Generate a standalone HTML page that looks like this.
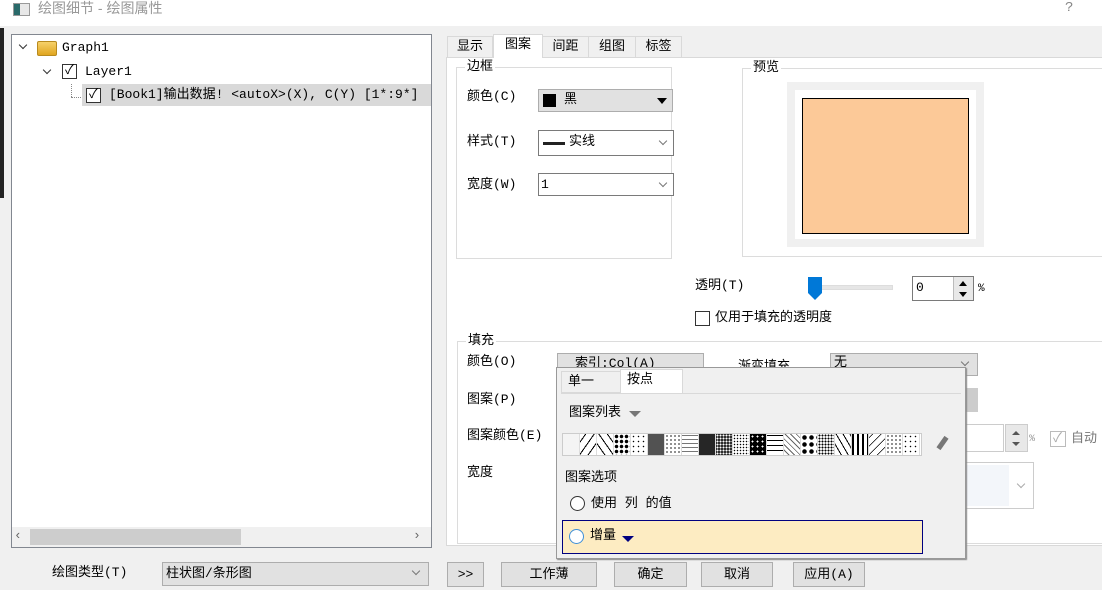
<!DOCTYPE html>
<html><head><meta charset="utf-8"><style>
*{box-sizing:border-box;margin:0;padding:0}
body{width:1102px;height:590px;overflow:hidden;background:#f0f0f0;position:relative;font-family:"Liberation Mono","Noto Sans CJK SC",monospace;font-size:13px;color:#000}
.a{position:absolute}
.mono{font-family:"Liberation Mono","Noto Sans CJK SC",monospace}
.lbl{position:absolute;font-size:13px;line-height:16px;white-space:nowrap}
.grp{position:absolute;border:1px solid #dcdcdc}
.gt{position:absolute;top:-9px;left:8px;background:#fff;padding:0 2px;line-height:16px}
.btn{position:absolute;background:#e1e1e1;border:1px solid #adadad;text-align:center;line-height:23px;font-size:13px}
.chev{position:absolute;width:6px;height:6px;border-right:1px solid #777;border-bottom:1px solid #777;transform:rotate(45deg)}
.cb{position:absolute;width:15px;height:15px;border:1px solid #333;background:#fff}
.tab{position:absolute;top:36px;height:22px;border:1px solid #d9d9d9;background:#f0f0f0;text-align:center;line-height:20px}
.pc{position:absolute;top:434px;width:17px;height:21px;border-right:1px solid #ddd}
</style></head><body>
<div class="a" style="left:0;top:0;width:1102px;height:26px;background:#fff"></div>
<div class="a" style="left:13px;top:3px;width:17px;height:13px;border:1px solid #999;background:linear-gradient(90deg,#2a6a6a 0 40%,#e8e8e8 40%)"></div>
<div class="lbl" style="left:38px;top:0px;color:#999;font-size:14px;font-family:'Liberation Sans','Noto Sans CJK SC',sans-serif">绘图细节 - 绘图属性</div>
<div class="lbl" style="left:1065px;top:0px;color:#888;font-size:14px">?</div>
<div class="a" style="left:0;top:28px;width:4px;height:170px;background:#222"></div>

<div class="a" style="left:11px;top:34px;width:421px;height:514px;background:#fff;border:1px solid #828790"></div>
<div class="chev" style="left:20px;top:42px;border-color:#333"></div>
<div class="a" style="left:37px;top:41px;width:20px;height:15px;background:linear-gradient(#f6d16a,#e0a520);border:1px solid #b88a1e;border-radius:2px"></div>
<div class="lbl" style="left:62px;top:40px">Graph1</div>
<div class="chev" style="left:44px;top:67px;border-color:#333"></div>
<div class="cb" style="left:62px;top:64px"></div><div class="lbl" style="left:65px;top:63px">✓</div>
<div class="lbl" style="left:85px;top:64px">Layer1</div>
<div class="a" style="left:71px;top:84px;height:13px;border-left:1px dotted #888"></div>
<div class="a" style="left:71px;top:97px;width:12px;border-top:1px dotted #888"></div>
<div class="a" style="left:82px;top:84px;width:349px;height:22px;background:#d9d9d9"></div>
<div class="cb" style="left:86px;top:88px"></div><div class="lbl" style="left:89px;top:87px">✓</div>
<div class="lbl" style="left:109px;top:87px">[Book1]输出数据! &lt;autoX&gt;(X), C(Y) [1*:9*]</div>
<div class="a" style="left:12px;top:527px;width:419px;height:20px;background:#f0f0f0"></div>
<div class="a" style="left:30px;top:529px;width:211px;height:16px;background:#cdcdcd"></div>
<div class="lbl" style="left:14px;top:528px;color:#666">‹</div><div class="lbl" style="left:413px;top:528px;color:#666">›</div>

<div class="a" style="left:446px;top:57px;width:660px;height:489px;background:#fff;border:1px solid #d9d9d9"></div>
<div class="tab" style="left:447px;width:46px">显示</div>
<div class="tab" style="left:493px;top:34px;width:50px;height:24px;background:#fff;border-bottom:none">图案</div>
<div class="tab" style="left:542px;width:47px">间距</div>
<div class="tab" style="left:588px;width:48px">组图</div>
<div class="tab" style="left:635px;width:47px">标签</div>

<div class="grp" style="left:456px;top:67px;width:216px;height:192px"><span class="gt">边框</span></div>
<div class="lbl" style="left:467px;top:89px">颜色(C)</div>
<div class="a" style="left:538px;top:89px;width:135px;height:23px;background:#e1e1e1;border:1px solid #adadad"></div>
<div class="a" style="left:543px;top:94px;width:13px;height:13px;background:#000"></div>
<div class="lbl" style="left:564px;top:92px">黑</div>
<div class="a" style="left:657px;top:98px;border-left:5px solid transparent;border-right:5px solid transparent;border-top:6px solid #000"></div>
<div class="lbl" style="left:467px;top:134px">样式(T)</div>
<div class="a" style="left:538px;top:130px;width:136px;height:26px;background:#fff;border:1px solid #7a7a7a"></div>
<div class="a" style="left:543px;top:142px;width:22px;height:3px;background:#222"></div>
<div class="lbl" style="left:569px;top:134px">实线</div>
<div class="chev" style="left:660px;top:138px"></div>
<div class="lbl" style="left:467px;top:177px">宽度(W)</div>
<div class="a" style="left:538px;top:173px;width:136px;height:23px;background:#fff;border:1px solid #7a7a7a"></div>
<div class="lbl" style="left:541px;top:177px">1</div>
<div class="chev" style="left:660px;top:180px"></div>

<div class="grp" style="left:742px;top:68px;width:362px;height:189px"><span class="gt">预览</span></div>
<div class="a" style="left:787px;top:82px;width:197px;height:165px;background:#f0f0f0"></div>
<div class="a" style="left:795px;top:90px;width:181px;height:149px;background:#fff"></div>
<div class="a" style="left:802px;top:98px;width:167px;height:136px;background:#fcc998;border:1px solid #000"></div>

<div class="lbl" style="left:695px;top:278px">透明(T)</div>
<div class="a" style="left:810px;top:285px;width:83px;height:5px;background:#e6e6e6;border:1px solid #ddd"></div>
<div class="a" style="left:808px;top:277px;width:14px;height:16px;background:#0078d7"></div>
<div class="a" style="left:808px;top:293px;border-left:7px solid transparent;border-right:7px solid transparent;border-top:7px solid #0078d7"></div>
<div class="a" style="left:912px;top:276px;width:62px;height:25px;background:#fff;border:1px solid #7a7a7a"></div>
<div class="lbl" style="left:916px;top:280px">0</div>
<div class="a" style="left:953px;top:277px;width:20px;height:23px;background:#e8e8e8;border-left:1px solid #bbb"></div>
<div class="a" style="left:959px;top:281px;border-left:4px solid transparent;border-right:4px solid transparent;border-bottom:5px solid #000"></div>
<div class="a" style="left:959px;top:292px;border-left:4px solid transparent;border-right:4px solid transparent;border-top:5px solid #000"></div>
<div class="lbl" style="left:978px;top:281px;font-size:11px">%</div>
<div class="cb" style="left:695px;top:311px;border-color:#333"></div>
<div class="lbl" style="left:715px;top:310px">仅用于填充的透明度</div>

<div class="grp" style="left:457px;top:341px;width:650px;height:203px"><span class="gt">填充</span></div>
<div class="lbl" style="left:467px;top:354px">颜色(O)</div>
<div class="lbl" style="left:467px;top:392px">图案(P)</div>
<div class="lbl" style="left:467px;top:428px">图案颜色(E)</div>
<div class="lbl" style="left:467px;top:465px">宽度</div>
<div class="a" style="left:557px;top:353px;width:147px;height:24px;background:#e1e1e1;border:1px solid #adadad"></div>
<div class="lbl" style="left:575px;top:356px">索引:Col(A)</div>
<div class="lbl" style="left:738px;top:359px">渐变填充</div>
<div class="a" style="left:830px;top:353px;width:148px;height:23px;background:#e1e1e1;border:1px solid #adadad"></div>
<div class="lbl" style="left:834px;top:355px">无</div>
<div class="chev" style="left:962px;top:359px"></div>
<div class="a" style="left:960px;top:388px;width:18px;height:24px;background:#ccc"></div>
<div class="a" style="left:960px;top:424px;width:44px;height:28px;background:#fff;border:1px solid #ccc"></div>
<div class="a" style="left:1005px;top:424px;width:23px;height:28px;background:#e8e8e8;border:1px solid #ccc"></div>
<div class="a" style="left:1012px;top:431px;border-left:4px solid transparent;border-right:4px solid transparent;border-bottom:4px solid #555"></div>
<div class="a" style="left:1012px;top:442px;border-left:4px solid transparent;border-right:4px solid transparent;border-top:4px solid #555"></div>
<div class="lbl" style="left:1029px;top:432px;color:#999;font-size:10px">%</div>
<div class="a" style="left:1050px;top:431px;width:16px;height:16px;border:1px solid #bbb;background:#fff"></div>
<div class="lbl" style="left:1053px;top:431px;color:#aaa">✓</div>
<div class="lbl" style="left:1071px;top:431px;color:#777">自动</div>
<div class="a" style="left:960px;top:462px;width:74px;height:47px;background:#fff;border:1px solid #ccc"></div>
<div class="a" style="left:962px;top:465px;width:47px;height:41px;background:#f3f6fa"></div>
<div class="chev" style="left:1018px;top:481px;border-color:#aaa"></div>

<div class="a" style="left:556px;top:367px;width:410px;height:192px;background:#f0f0f0;border:1px solid #999;box-shadow:1px 1px 1px #888"></div>
<div class="a" style="left:561px;top:371px;width:60px;height:22px;border:1px solid #d9d9d9;background:#f0f0f0"></div>
<div class="lbl" style="left:568px;top:374px">单一</div>
<div class="a" style="left:620px;top:369px;width:63px;height:25px;background:#fff;border:1px solid #d9d9d9;border-bottom:none"></div>
<div class="lbl" style="left:627px;top:372px">按点</div>
<div class="a" style="left:561px;top:393px;width:400px;border-top:1px solid #d9d9d9"></div>
<div class="lbl" style="left:569px;top:405px">图案列表</div>
<div class="a" style="left:629px;top:411px;border-left:6px solid transparent;border-right:6px solid transparent;border-top:6px solid #777"></div>
<div class="a" style="left:562px;top:433px;width:360px;height:23px;border:1px solid #ccc;background:#fff"></div>
<div class="pc" style="left:563px;background:#f4f4f4"></div>
<div class="pc" style="left:580px;background:repeating-linear-gradient(-55deg,#fff 0 6px,#000 6px 7px)"></div>
<div class="pc" style="left:597px;background:repeating-linear-gradient(55deg,#fff 0 6px,#000 6px 7px)"></div>
<div class="pc" style="left:614px;background:radial-gradient(#000 1.5px,transparent 2px) 0 0/5px 5px #fff"></div>
<div class="pc" style="left:631px;background:radial-gradient(#000 0.6px,transparent 0.9px) 0 0/5px 5px #fff"></div>
<div class="pc" style="left:648px;background:radial-gradient(#000 0.7px,transparent 1px) 0 0/2px 2px #ccc"></div>
<div class="pc" style="left:665px;background:radial-gradient(#000 0.6px,transparent 0.9px) 0 0/4px 4px #fff"></div>
<div class="pc" style="left:682px;background:repeating-linear-gradient(0deg,#fff 0 3px,#777 3px 4px)"></div>
<div class="pc" style="left:699px;background:radial-gradient(#000 0.8px,transparent 1px) 0 0/2px 2px #999"></div>
<div class="pc" style="left:716px;background:radial-gradient(#fff 0.9px,transparent 1.1px) 0 0/3px 3px #222"></div>
<div class="pc" style="left:733px;background:radial-gradient(#000 0.6px,transparent 0.9px) 0 0/3px 3px #fff"></div>
<div class="pc" style="left:750px;background:radial-gradient(#fff 0.8px,transparent 1px) 0 0/5px 5px #000"></div>
<div class="pc" style="left:767px;background:repeating-linear-gradient(0deg,#fff 0 4px,#000 4px 5px)"></div>
<div class="pc" style="left:784px;background:repeating-linear-gradient(45deg,#fff 0 3px,#666 3px 4px)"></div>
<div class="pc" style="left:801px;background:radial-gradient(#000 2px,transparent 2.5px) 0 0/7px 7px #fff"></div>
<div class="pc" style="left:818px;background:radial-gradient(#000 0.9px,transparent 1.1px) 0 0/3px 3px #fff"></div>
<div class="pc" style="left:835px;background:repeating-linear-gradient(60deg,#fff 0 5px,#000 5px 6px)"></div>
<div class="pc" style="left:852px;background:repeating-linear-gradient(90deg,#000 0 2px,#fff 2px 5px)"></div>
<div class="pc" style="left:869px;background:repeating-linear-gradient(-45deg,#fff 0 5px,#000 5px 6px)"></div>
<div class="pc" style="left:886px;background:radial-gradient(#000 0.6px,transparent 0.9px) 0 0/4px 4px #fff"></div>
<div class="pc" style="left:903px;background:radial-gradient(#000 0.6px,transparent 0.9px) 0 0/5px 5px #fff"></div>
<div class="a" style="left:940px;top:436px;width:5px;height:14px;background:#777;transform:rotate(35deg)"></div>
<div class="lbl" style="left:565px;top:470px">图案选项</div>
<div class="a" style="left:570px;top:496px;width:15px;height:15px;border:1px solid #333;border-radius:50%;background:#fff"></div>
<div class="lbl" style="left:591px;top:496px">使用 列 的值</div>
<div class="a" style="left:562px;top:520px;width:361px;height:34px;background:#fdecc2;border:1px solid #000080"></div>
<div class="a" style="left:569px;top:529px;width:15px;height:15px;border:1px solid #3e8fd8;border-radius:50%;background:#fff"></div>
<div class="lbl" style="left:590px;top:528px">增量</div>
<div class="a" style="left:622px;top:536px;border-left:6px solid transparent;border-right:6px solid transparent;border-top:6px solid #000080"></div>

<div class="lbl" style="left:52px;top:565px">绘图类型(T)</div>
<div class="a" style="left:162px;top:562px;width:267px;height:24px;background:#e1e1e1;border:1px solid #adadad"></div>
<div class="lbl" style="left:166px;top:566px">柱状图/条形图</div>
<div class="chev" style="left:413px;top:568px"></div>
<div class="btn" style="left:447px;top:562px;width:37px;height:25px">&gt;&gt;</div>
<div class="btn" style="left:501px;top:562px;width:96px;height:25px">工作薄</div>
<div class="btn" style="left:614px;top:562px;width:73px;height:25px">确定</div>
<div class="btn" style="left:701px;top:562px;width:72px;height:25px">取消</div>
<div class="btn" style="left:793px;top:562px;width:72px;height:25px">应用(A)</div>
</body></html>
